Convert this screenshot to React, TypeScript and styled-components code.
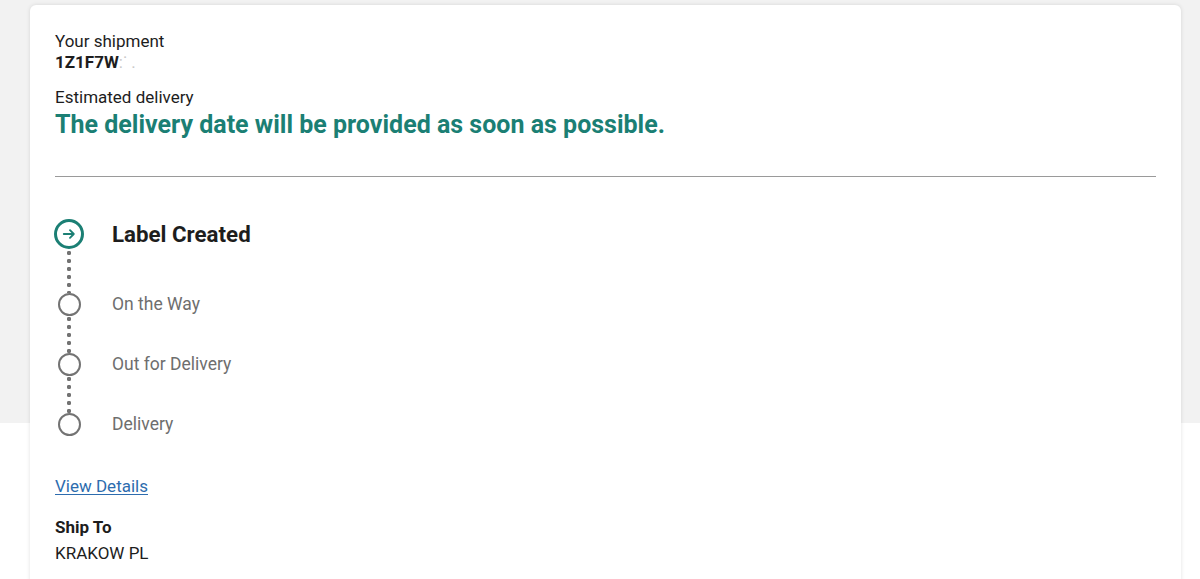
import React from 'react';
import styled, { createGlobalStyle } from 'styled-components';

const GlobalStyle = createGlobalStyle`
  html, body {
    margin: 0;
    padding: 0;
  }
  body {
    font-family: Roboto, "Liberation Sans", Arial, sans-serif;
    color: #1d1d1d;
    background: #fff;
  }
`;

const colors = {
  teal: '#1b7f74',
  text: '#1d1d1d',
  muted: '#6e6e6e',
  ring: '#737373',
  link: '#2d6cae',
  rule: '#9a9a9a',
};

// gap = space above each step (dotted connector fills it)
const steps = [
  { label: 'Label Created', active: true, gap: 0 },
  { label: 'On the Way', active: false, gap: 44 },
  { label: 'Out for Delivery', active: false, gap: 38 },
  { label: 'Delivery', active: false, gap: 38 },
];

const Page = styled.div`
  min-height: 579px;
  background: linear-gradient(#f2f2f2 0, #f2f2f2 423px, #ffffff 423px);
  padding: 5px 19px 0 30px;
  overflow: hidden;
`;

const Card = styled.div`
  background: #fff;
  border-radius: 6px 6px 0 0;
  box-shadow: 0 0 4px rgba(0, 0, 0, 0.12);
  padding: 26px 25px 20px;
  min-height: 560px;
  box-sizing: border-box;
`;

const Small = styled.div`
  font-size: 17px;
  line-height: 21px;
  color: ${colors.text};
`;

const Tracking = styled.div`
  font-size: 17px;
  line-height: 21px;
  font-weight: 700;
  color: ${colors.text};

  & span {
    color: #c8c8c8;
    font-weight: 400;
  }
`;

const EstLabel = styled(Small)`
  margin-top: 14px;
`;

const Headline = styled.h2`
  margin: 2px 0 0;
  font-size: 25px;
  line-height: 30px;
  font-weight: 700;
  color: ${colors.teal};
`;

const Rule = styled.hr`
  border: 0;
  border-top: 1px solid ${colors.rule};
  margin: 36px 0 0;
`;

const Timeline = styled.ol`
  list-style: none;
  margin: 42px 0 0;
  padding: 0;
`;

const Step = styled.li<{ $active: boolean; $gap: number }>`
  display: flex;
  align-items: center;
  height: ${(p) => (p.$active ? 30 : 22)}px;
  margin-top: ${(p) => p.$gap}px;
`;

const MarkerCol = styled.div`
  width: 30px;
  margin-left: -1px;
  display: flex;
  justify-content: center;
  position: relative;
`;

const Ring = styled.div<{ $active: boolean }>`
  box-sizing: border-box;
  width: ${(p) => (p.$active ? 30 : 23)}px;
  height: ${(p) => (p.$active ? 30 : 23)}px;
  border-radius: 50%;
  border: ${(p) => (p.$active ? `3px solid ${colors.teal}` : `2px solid ${colors.ring}`)};
  display: flex;
  align-items: center;
  justify-content: center;
  background: #fff;
  position: relative;
  z-index: 1;
`;

const Dots = styled.div<{ $h: number }>`
  position: absolute;
  left: 13px;
  bottom: 100%;
  height: ${(p) => p.$h}px;
  width: 4px;
  background-image: radial-gradient(circle, ${colors.ring} 2px, transparent 2.3px);
  background-size: 4px 8px;
  background-position: 0 2px;
`;

const StepLabel = styled.span<{ $active: boolean }>`
  margin-left: 28px;
  font-size: ${(p) => (p.$active ? 22.3 : 17.5)}px;
  font-weight: ${(p) => (p.$active ? 700 : 400)};
  color: ${(p) => (p.$active ? colors.text : colors.muted)};
`;

const DetailsLink = styled.a`
  display: inline-block;
  margin-top: 41px;
  font-size: 17px;
  color: ${colors.link};
  text-decoration: underline;
  text-underline-offset: 2px;
`;

const ShipTo = styled.div`
  margin-top: 20px;
  font-size: 17px;
  font-weight: 700;
  line-height: 22px;
`;

const ShipCity = styled.div`
  font-size: 17px;
  line-height: 22px;
  margin-top: 4px;
`;

function Arrow() {
  return (
    <svg width="14" height="14" viewBox="0 0 14 14" fill="none">
      <path d="M1.8 7h10M8 3.2L11.8 7L8 10.8" stroke={colors.teal} strokeWidth="1.9" strokeLinecap="round" strokeLinejoin="round" />
    </svg>
  );
}

export default function App() {
  return (
    <>
      <GlobalStyle />
      <Page>
        <Card>
          <Small>Your shipment</Small>
          <Tracking>
            1Z1F7W<span>:˙ .</span>
          </Tracking>
          <EstLabel>Estimated delivery</EstLabel>
          <Headline>The delivery date will be provided as soon as possible.</Headline>
          <Rule />

          <Timeline>
            {steps.map((s) => (
              <Step key={s.label} $active={s.active} $gap={s.gap}>
                <MarkerCol>
                  {s.gap > 0 && <Dots $h={s.gap + 2} />}
                  <Ring $active={s.active}>{s.active && <Arrow />}</Ring>
                </MarkerCol>
                <StepLabel $active={s.active}>{s.label}</StepLabel>
              </Step>
            ))}
          </Timeline>

          <DetailsLink href="#">View Details</DetailsLink>
          <ShipTo>Ship To</ShipTo>
          <ShipCity>KRAKOW PL</ShipCity>
        </Card>
      </Page>
    </>
  );
}
